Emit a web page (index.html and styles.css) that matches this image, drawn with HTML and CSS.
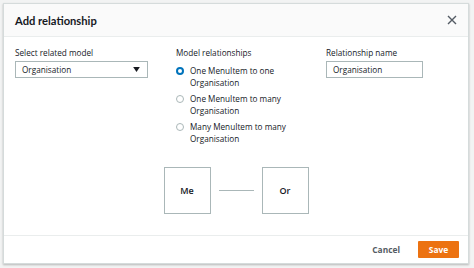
FILE: index.html
```html
<!DOCTYPE html>
<html>
<head>
<meta charset="utf-8">
<link rel="stylesheet" href="styles.css">
</head>
<body>
<div class="page">
  <div class="modal">
    <div class="header">
      <div class="title">Add relationship</div>
      <svg class="close" width="10" height="10" viewBox="0 0 10 10"><path d="M1 1 L9 9 M9 1 L1 9" stroke="#545b64" stroke-width="1.4" fill="none"/></svg>
    </div>
    <div class="content">
      <div class="fields">
        <div class="col col1">
          <div class="label">Select related model</div>
          <div class="select"><span>Organisation</span><svg width="8" height="6" viewBox="0 0 8 6"><path d="M0 0 L8 0 L4 6 Z" fill="#16191f"/></svg></div>
        </div>
        <div class="col col2">
          <div class="label">Model relationships</div>
          <div class="radios">
            <div class="radio checked"><span class="dot"></span><span class="rtext">One MenuItem to one<br>Organisation</span></div>
            <div class="radio"><span class="dot"></span><span class="rtext">One MenuItem to many<br>Organisation</span></div>
            <div class="radio"><span class="dot"></span><span class="rtext">Many MenuItem to many<br>Organisation</span></div>
          </div>
        </div>
        <div class="col col3">
          <div class="label">Relationship name</div>
          <div class="input">Organisation</div>
        </div>
      </div>
      <div class="diagram">
        <div class="box">Me</div>
        <div class="link"></div>
        <div class="box">Or</div>
      </div>
    </div>
    <div class="footer">
      <span class="cancel">Cancel</span>
      <span class="save">Save</span>
    </div>
  </div>
</div>
</body>
</html>
```
FILE: styles.css
```css
* { box-sizing: border-box; }
html, body { margin: 0; padding: 0; }
body {
  width: 474px;
  height: 268px;
  overflow: hidden;
  background: #f2f3f3;
  font-family: "Open Sans", "Noto Sans", sans-serif;
  color: #16191f;
}
.page {
  padding: 3px 0 0 3px;
  height: 268px;
}
.modal {
  width: 466px;
  height: 261px;
  background: #fff;
  border: 1px solid #d5dbdb;
  box-shadow: 0 1px 2px rgba(0,0,0,0.25);
  display: flex;
  flex-direction: column;
}
.header {
  height: 33px;
  background: #fafafa;
  border-bottom: 1px solid #eaeded;
  display: flex;
  align-items: center;
  justify-content: space-between;
  padding: 0 11px 0 11px;
}
.title {
  font-family: "Lato", "Open Sans", sans-serif;
  font-size: 11.2px;
  font-weight: 700;
}
.close { display: block; }
.content {
  flex: 1;
  padding: 10px 0 0 11px;
  display: flex;
  flex-direction: column;
}
.fields {
  display: grid;
  grid-template-columns: 161px 150px 97px;
}
.label {
  font-size: 8.2px;
  line-height: 11px;
  color: #16191f;
  margin-bottom: 3px;
}
.select {
  width: 133px;
  height: 17px;
  border: 1px solid #aab7b8;
  display: flex;
  align-items: center;
  justify-content: space-between;
  padding: 0 7px 0 6px;
  font-size: 8.2px;
}
.select svg { display: block; width: 7px; height: 5px; }
.input {
  width: 97px;
  height: 17px;
  border: 1px solid #aab7b8;
  display: flex;
  align-items: center;
  padding: 0 6px;
  font-size: 8.2px;
}
.radios {
  display: flex;
  flex-direction: column;
  gap: 4px;
  margin-top: 7px;
}
.radio {
  display: flex;
  align-items: flex-start;
  font-size: 8.2px;
  line-height: 12px;
}
.dot {
  width: 8px;
  height: 8px;
  border-radius: 50%;
  border: 1px solid #aab7b8;
  margin: 2px 6px 0 0;
  flex: none;
  background: #fff;
}
.radio.checked .dot {
  border: 2.5px solid #0073bb;
}
.diagram {
  display: flex;
  justify-content: center;
  align-items: center;
  margin-top: 22px;
  padding-right: 11px;
}
.box {
  width: 47px;
  height: 47px;
  border: 1px solid #aab7b8;
  display: flex;
  align-items: center;
  justify-content: center;
  font-size: 9px;
  font-weight: 600;
}
.link {
  width: 35px;
  height: 1px;
  background: #aab7b8;
  margin: 0 8px;
}
.footer {
  height: 28px;
  border-top: 1px solid #eaeded;
  display: flex;
  align-items: center;
  justify-content: flex-end;
  padding-right: 9px;
}
.cancel {
  font-size: 8.4px;
  font-weight: 700;
  color: #545b64;
  margin-right: 18px;
}
.save {
  width: 41px;
  height: 17px;
  background: #ec7211;
  color: #fff;
  font-size: 8.4px;
  font-weight: 700;
  display: flex;
  align-items: center;
  justify-content: center;
  border-radius: 1px;
}
```
